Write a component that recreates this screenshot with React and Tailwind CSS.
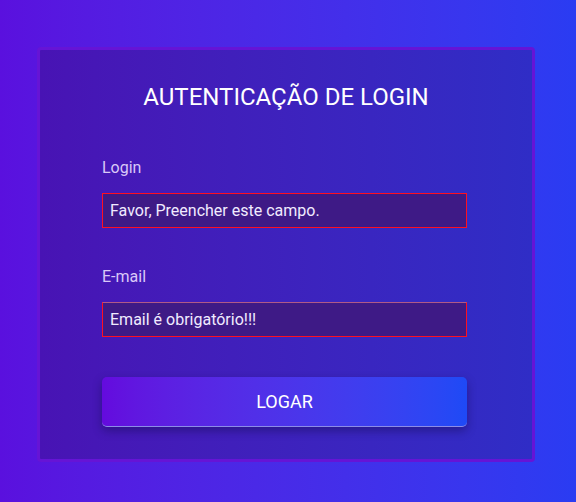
import React from 'react';

export default function App() {
  return (
    <div
      className="min-h-[502px] w-full bg-gradient-to-r from-[#5a10de] to-[#2a3cf2] pt-[47px] pl-[37px]"
      style={{ fontFamily: 'Roboto, "Liberation Sans", sans-serif' }}
    >
      {/* Card */}
      <div className="w-[498px] h-[415px] rounded-[4px] border-[3px] border-[#6614d6] bg-gradient-to-r from-[#4813b4] to-[#2f2dc6] pt-[33px]">
        <h1 className="text-center text-[24px] leading-[28px] text-white">
          AUTENTICAÇÃO DE LOGIN
        </h1>

        <div className="pl-[62px] mt-[45px] flex flex-col">
          <label className="text-[16px] leading-[24px] text-[#d9c8f7]">Login</label>
          <input
            type="text"
            readOnly
            value="Favor, Preencher este campo."
            className="mt-[13px] w-[365px] h-[35px] border border-[#ff1020] bg-[#3e1a86] px-[7px] text-[16px] text-[#f1ebff] outline-none"
          />

          <label className="mt-[37px] text-[16px] leading-[24px] text-[#d9c8f7]">E-mail</label>
          <input
            type="text"
            readOnly
            value="Email é obrigatório!!!"
            className="mt-[13px] w-[365px] h-[35px] border border-[#ff1020] border-t-[#b05a86] bg-[#3e1a86] px-[7px] text-[16px] text-[#f1ebff] outline-none"
          />

          <button className="mt-[40px] w-[365px] h-[50px] rounded-[5px] bg-gradient-to-r from-[#640ade] to-[#1e4af6] border-b border-[#8c8ce8] text-white text-[18px] shadow-[0_4px_10px_rgba(20,10,80,0.45)]">
            LOGAR
          </button>
        </div>
      </div>
    </div>
  );
}
